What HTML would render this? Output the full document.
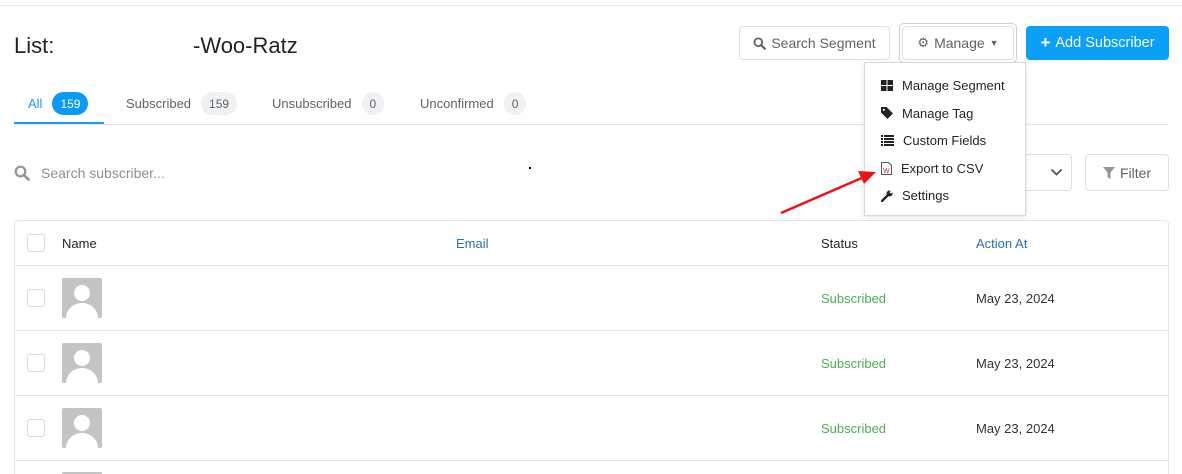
<!DOCTYPE html>
<html><head><style>
*{box-sizing:border-box;margin:0;padding:0}
html,body{width:1182px;height:474px;overflow:hidden}
body{background:#fff;font-family:"Liberation Sans",sans-serif;position:relative;color:#1d2327}
.a{position:absolute}
.btn{position:absolute;border:1px solid #dcdfe6;border-radius:4px;background:#fff;font-size:14px;color:#606266;display:flex;align-items:center;justify-content:center;gap:5px}
.tab{position:absolute;top:92px;font-size:13px;color:#606266;display:flex;align-items:center;gap:10px}
.badge{background:#f0f1f3;border-radius:12px;height:23px;padding:0 8px;display:flex;align-items:center;font-size:12px;color:#606266}
.menu div{display:flex;align-items:center;gap:9px;height:27.5px;font-size:13px;color:#1d2327;padding-left:16px}
.cb{position:absolute;width:18px;height:18px;border:1px solid #d8dbe0;border-radius:3px;left:27px}
.av{position:absolute;left:62px;width:40px;height:40px;background:#c4c4c4;border-radius:2px;overflow:hidden}
.row{position:absolute;left:14px;width:1155px;height:65px;border-top:1px solid #e4e6ea}
.st{position:absolute;left:821px;font-size:13px;color:#4caf50}
.dt{position:absolute;left:976px;font-size:13px;color:#333}
</style></head><body>
<div class="a" style="left:0;top:5px;width:1182px;height:1px;background:#e8e8e8"></div>
<div class="a" style="left:14px;top:33px;font-size:22px;color:#1d2327">List:</div>
<div class="a" style="left:193px;top:33px;font-size:22px;color:#1d2327">-Woo-Ratz</div>
<div class="btn" style="left:739px;top:26px;width:151px;height:34px"><svg width="13" height="13" viewBox="0 0 16 16"><circle cx="6.5" cy="6.5" r="4.8" fill="none" stroke="#606266" stroke-width="2.2"/><path d="M10 10l4.5 4.5" stroke="#606266" stroke-width="2.6" stroke-linecap="round"/></svg>Search Segment</div>
<div class="a" style="left:899px;top:23px;width:118px;height:40px;border:1px solid #d0d0d0;border-radius:5px"></div>
<div class="btn" style="left:902px;top:26px;width:112px;height:34px"><span style="font-size:13px">⚙</span>Manage <span style="font-size:9px">▼</span></div>
<div class="btn" style="left:1026px;top:26px;width:143px;height:34px;background:#0aa0f5;border-color:#0aa0f5;color:#fff;font-size:14.5px"><b style="font-size:17px">+</b>Add Subscriber</div>
<div class="tab" style="left:28px"><span style="color:#1a9af5">All</span><span class="badge" style="background:#0a9af5;color:#fff">159</span></div>
<div class="a" style="left:14px;top:122px;width:90px;height:3px;background:#1a9af5"></div>
<div class="tab" style="left:126px">Subscribed<span class="badge">159</span></div>
<div class="tab" style="left:272px">Unsubscribed<span class="badge">0</span></div>
<div class="tab" style="left:420px">Unconfirmed<span class="badge">0</span></div>
<div class="a" style="left:14px;top:124px;width:1155px;height:1px;background:#e4e6ea"></div>
<svg class="a" style="left:14px;top:165px" width="16" height="16" viewBox="0 0 16 16"><circle cx="6.5" cy="6.5" r="4.8" fill="none" stroke="#909399" stroke-width="2.2"/><path d="M10 10l4.5 4.5" stroke="#909399" stroke-width="2.6" stroke-linecap="round"/></svg>
<div class="a" style="left:41px;top:165px;font-size:14px;color:#8a8f98">Search subscriber...</div>
<div class="a" style="left:529px;top:167px;width:2px;height:2px;background:#000"></div>
<div class="a" style="left:1000px;top:154px;width:72px;height:37px;border:1px solid #dcdfe6;border-radius:4px"></div>
<svg class="a" style="left:1050px;top:168px" width="13" height="9" viewBox="0 0 13 9"><path d="M1.5 1.5l5 5 5-5" fill="none" stroke="#555" stroke-width="1.8"/></svg>
<div class="btn" style="left:1085px;top:154px;width:84px;height:37px"><svg width="12" height="12" viewBox="0 0 12 12"><path d="M0 0h12L7.5 5.5V12L4.5 10V5.5z" fill="#909399"/></svg> Filter</div>
<div class="a" style="left:14px;top:220px;width:1155px;height:320px;border:1px solid #e4e6ea;border-radius:4px"></div>
<div class="cb" style="top:234px"></div>
<div class="a" style="left:62px;top:236px;font-size:13px">Name</div>
<div class="a" style="left:456px;top:236px;font-size:13px;color:#2a6fb0">Email</div>
<div class="a" style="left:821px;top:236px;font-size:13px">Status</div>
<div class="a" style="left:976px;top:236px;font-size:13px;color:#2a6fb0">Action At</div>
<div class="row" style="top:265px"></div><div class="row" style="top:330px"></div><div class="row" style="top:395px"></div><div class="row" style="top:460px"></div>
<div class="cb" style="top:289px"></div><div class="cb" style="top:354px"></div><div class="cb" style="top:419px"></div>
<div class="av" style="top:278px"><svg width="40" height="40"><circle cx="20" cy="15" r="8" fill="#fff"/><ellipse cx="20" cy="40" rx="16" ry="15" fill="#fff"/></svg></div>
<div class="av" style="top:343px"><svg width="40" height="40"><circle cx="20" cy="15" r="8" fill="#fff"/><ellipse cx="20" cy="40" rx="16" ry="15" fill="#fff"/></svg></div>
<div class="av" style="top:408px"><svg width="40" height="40"><circle cx="20" cy="15" r="8" fill="#fff"/><ellipse cx="20" cy="40" rx="16" ry="15" fill="#fff"/></svg></div>
<div class="av" style="top:472px"></div>
<div class="st" style="top:291px">Subscribed</div><div class="dt" style="top:291px">May 23, 2024</div>
<div class="st" style="top:356px">Subscribed</div><div class="dt" style="top:356px">May 23, 2024</div>
<div class="st" style="top:421px">Subscribed</div><div class="dt" style="top:421px">May 23, 2024</div>
<div class="a menu" style="left:864px;top:62px;width:162px;height:154px;background:#fff;border:1px solid #d8d8d8;box-shadow:0 2px 6px rgba(0,0,0,.1);padding-top:9px">
<div><svg width="12" height="11"><rect x="0" y="0" width="5.5" height="5" fill="#222"/><rect x="6.5" y="0" width="5.5" height="5" fill="#222"/><rect x="0" y="6" width="5.5" height="5" fill="#222"/><rect x="6.5" y="6" width="5.5" height="5" fill="#222"/></svg>Manage Segment</div>
<div><svg width="12" height="12" viewBox="0 0 12 12"><path d="M0 0h5.5L12 6.5 6.5 12 0 5.5z" fill="#222"/><circle cx="2.8" cy="2.8" r="1.1" fill="#fff"/></svg>Manage Tag</div>
<div><svg width="13" height="11"><g fill="#222"><rect x="0" y="0" width="2" height="2"/><rect x="3" y="0" width="10" height="2"/><rect x="0" y="3" width="2" height="2"/><rect x="3" y="3" width="10" height="2"/><rect x="0" y="6" width="2" height="2"/><rect x="3" y="6" width="10" height="2"/><rect x="0" y="9" width="2" height="2"/><rect x="3" y="9" width="10" height="2"/></g></svg>Custom Fields</div>
<div><svg width="11" height="13" viewBox="0 0 11 13"><path d="M.5.5h7l3 3v9h-10z" fill="none" stroke="#555"/><text x="2" y="11" font-size="7" fill="#a33" font-family="Liberation Sans">W</text></svg>Export to CSV</div>
<div><svg width="12" height="12" viewBox="0 0 12 12"><path d="M1 11l5-5" stroke="#222" stroke-width="2.4" stroke-linecap="round"/><circle cx="8.5" cy="3.5" r="3" fill="#222"/><circle cx="9.8" cy="2.2" r="1.2" fill="#fff"/></svg>Settings</div>
</div>
<svg class="a" style="left:778px;top:166px" width="100" height="50"><path d="M3 47L86 11" stroke="#e8141a" stroke-width="2.5"/><path d="M98 6L80 5 86 18z" fill="#e8141a"/></svg>
</body></html>
